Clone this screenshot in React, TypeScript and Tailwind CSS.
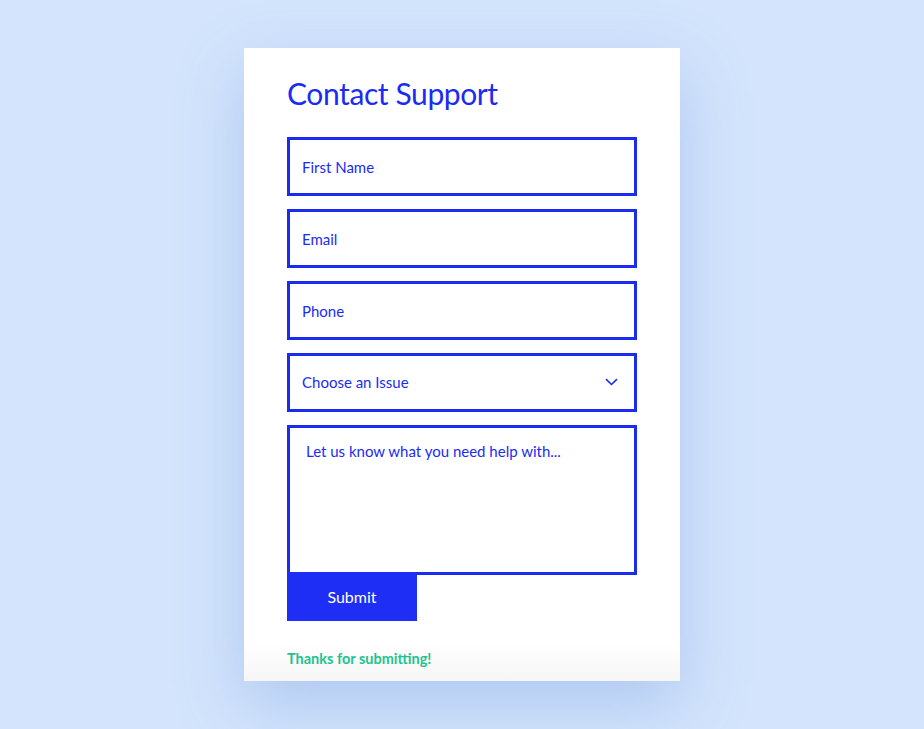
import React, { useState } from 'react';

const fieldClass =
  "w-full h-[59px] border-[3px] border-[#1a2cf4] bg-white px-[12px] text-[15px] text-[#1a2cf4] placeholder:text-[#1a2cf4] outline-none";

const App: React.FC = () => {
  const [issue, setIssue] = useState('');

  return (
    <div className="min-h-screen w-full bg-[#d3e4fc] flex justify-center pt-[48px]" style={{ fontFamily: 'Lato, "Noto Sans", sans-serif' }}>
      <div className="relative w-[436px] h-[633px] bg-white shadow-[0_24px_60px_rgba(110,150,220,0.35)] px-[43px] pt-[27px] overflow-hidden">
        {/* soft fade at the bottom of the card */}
        <div className="absolute bottom-0 left-0 right-0 h-[40px] bg-gradient-to-b from-white to-[#f6f6f6] pointer-events-none"></div>

        <h1 className="text-[30px] leading-[37px] text-[#1a2cf4] tracking-[-0.4px] mb-[25px]">Contact Support</h1>

        <form className="relative flex flex-col gap-[13px]" onSubmit={(e) => e.preventDefault()}>
          <input type="text" placeholder="First Name" className={fieldClass} />
          <input type="email" placeholder="Email" className={fieldClass} />
          <input type="tel" placeholder="Phone" className={fieldClass} />

          <div className="relative">
            <select
              value={issue}
              onChange={(e) => setIssue(e.target.value)}
              className={fieldClass + " appearance-none h-[58px]"}
            >
              <option value="">Choose an Issue</option>
              <option value="billing">Billing</option>
              <option value="technical">Technical</option>
            </select>
            <svg className="absolute right-[19px] top-[25px] pointer-events-none" width="13" height="8" viewBox="0 0 13 8" fill="none">
              <path d="M1 1.2L6.5 6.5L12 1.2" stroke="#1a2cf4" strokeWidth="1.6" />
            </svg>
          </div>

          <div className="flex flex-col">
            <textarea
              placeholder="Let us know what you need help with..."
              className="w-full h-[150px] border-[3px] border-[#1a2cf4] bg-white px-[16px] py-[12px] text-[15px] text-[#1a2cf4] placeholder:text-[#1a2cf4] outline-none resize-none"
            />
            <button
              type="submit"
              className="w-[130px] h-[49px] -mt-[3px] bg-[#1e2ef4] text-white text-[16px]"
            >
              Submit
            </button>
          </div>
        </form>

        <p className="relative mt-[27px] text-[14.5px] font-bold text-[#1ec38f]">Thanks for submitting!</p>
      </div>
    </div>
  );
};

export default App;
